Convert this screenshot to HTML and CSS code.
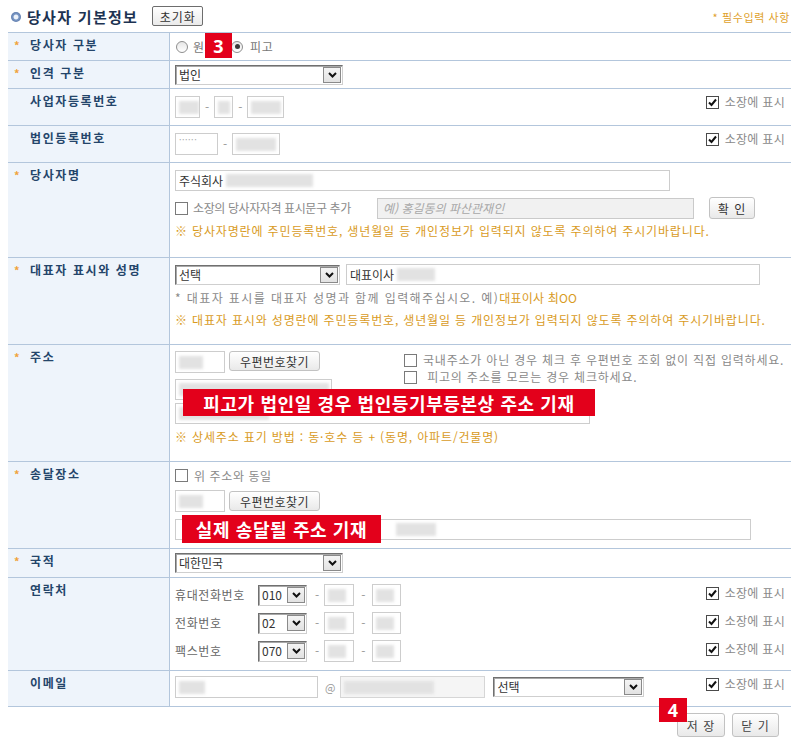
FILE: index.html
```html
<!DOCTYPE html>
<html lang="ko">
<head>
<meta charset="utf-8">
<title>당사자 기본정보</title>
<link rel="stylesheet" href="styles.css">
</head>
<body>
<div class="page">
  <div class="head">
    <div class="title">
      <span class="bullet"></span>
      <h2>당사자 기본정보</h2>
      <button class="btn-reset">초기화</button>
    </div>
    <div class="req">* 필수입력 사항</div>
  </div>

  <div class="form">
    <!-- 당사자 구분 -->
    <div class="row r1">
      <div class="lbl"><span class="star">*</span>당사자 구분</div>
      <div class="val center">
        <span class="radio r-first"></span><span class="opt">원고</span>
        <span class="radio on r-second"></span><span class="opt opt2">피고</span>
        <span class="badge b3">3</span>
      </div>
    </div>

    <!-- 인격 구분 -->
    <div class="row r2">
      <div class="lbl"><span class="star">*</span>인격 구분</div>
      <div class="val center">
        <div class="sel w168"><span class="sel-txt">법인</span><span class="sel-btn"><svg width="9" height="6" viewBox="0 0 9 6"><polyline points="1,1 4.5,4.5 8,1" fill="none" stroke="#111" stroke-width="2"/></svg></span></div>
      </div>
    </div>

    <!-- 사업자등록번호 -->
    <div class="row r3">
      <div class="lbl"><span class="nostar"></span>사업자등록번호</div>
      <div class="val split">
        <div class="line">
          <span class="inp biz1"><span class="blur bw20"></span></span>
          <span class="dash">-</span>
          <span class="inp biz2"><span class="blur bw12"></span></span>
          <span class="dash">-</span>
          <span class="inp biz3"><span class="blur bw30"></span></span>
        </div>
        <label class="show"><span class="cb on"><svg width="11" height="11" viewBox="0 0 11 11"><polyline points="2,5.5 4.5,8 9,2.5" fill="none" stroke="#111" stroke-width="2"/></svg></span><span>소장에 표시</span></label>
      </div>
    </div>

    <!-- 법인등록번호 -->
    <div class="row r4">
      <div class="lbl"><span class="nostar"></span>법인등록번호</div>
      <div class="val split">
        <div class="line">
          <span class="inp corp1"><span class="dots">· · · · · ·</span></span>
          <span class="dash">-</span>
          <span class="inp corp2"><span class="blur bw40"></span></span>
        </div>
        <label class="show"><span class="cb on"><svg width="11" height="11" viewBox="0 0 11 11"><polyline points="2,5.5 4.5,8 9,2.5" fill="none" stroke="#111" stroke-width="2"/></svg></span><span>소장에 표시</span></label>
      </div>
    </div>

    <!-- 당사자명 -->
    <div class="row r5">
      <div class="lbl"><span class="star">*</span>당사자명</div>
      <div class="val">
        <span class="inp name">주식회사<span class="blur bw87 ml3"></span></span>
        <div class="line l-qual">
          <span class="cb"></span>
          <span class="qual-txt">소장의 당사자자격 표시문구 추가</span>
          <span class="inp qual"><em>예) 홍길동의 파산관재인</em></span>
          <button class="btn ok">확 인</button>
        </div>
        <p class="warn w-name">※ 당사자명란에 주민등록번호, 생년월일 등 개인정보가 입력되지 않도록 주의하여 주시기바랍니다.</p>
      </div>
    </div>

    <!-- 대표자 -->
    <div class="row r6">
      <div class="lbl"><span class="star">*</span>대표자 표시와 성명</div>
      <div class="val">
        <div class="line">
          <div class="sel w165"><span class="sel-txt">선택</span><span class="sel-btn"><svg width="9" height="6" viewBox="0 0 9 6"><polyline points="1,1 4.5,4.5 8,1" fill="none" stroke="#111" stroke-width="2"/></svg></span></div>
          <span class="inp rep">대표이사<span class="blur bw38 ml3"></span></span>
        </div>
        <p class="note">* 대표자 표시를 대표자 성명과 함께 입력해주십시오. 예)<span class="orange">대표이사 최OO</span></p>
        <p class="warn w-rep">※ 대표자 표시와 성명란에 주민등록번호, 생년월일 등 개인정보가 입력되지 않도록 주의하여 주시기바랍니다.</p>
      </div>
    </div>

    <!-- 주소 -->
    <div class="row r7">
      <div class="lbl"><span class="star">*</span>주소</div>
      <div class="val">
        <div class="line l-zip">
          <span class="inp zip"><span class="blur bw24"></span></span>
          <button class="btn post">우편번호찾기</button>
          <div class="addr-opts">
            <label class="opt-line"><span class="cb"></span><span>국내주소가 아닌 경우 체크 후 우편번호 조회 없이 직접 입력하세요.</span></label>
            <label class="opt-line o2"><span class="cb"></span><span>&nbsp;피고의 주소를 모르는 경우 체크하세요.</span></label>
          </div>
        </div>
        <span class="inp addr1"><span class="blur bw150"></span></span>
        <span class="inp addr2"><span class="blur bw90"></span></span>
        <p class="warn w-addr">※ 상세주소 표기 방법 : 동·호수 등 + (동명, 아파트/건물명)</p>
        <div class="callout c1">피고가 법인일 경우 법인등기부등본상 주소 기재</div>
      </div>
    </div>

    <!-- 송달장소 -->
    <div class="row r8">
      <div class="lbl"><span class="star">*</span>송달장소</div>
      <div class="val">
        <label class="line l-same"><span class="cb"></span><span class="same-txt">위 주소와 동일</span></label>
        <div class="line l-zip2">
          <span class="inp zip"><span class="blur bw24"></span></span>
          <button class="btn post">우편번호찾기</button>
        </div>
        <span class="inp addr3"><span class="blur bw40 ml-far"></span></span>
        <div class="callout c2">실제 송달될 주소 기재</div>
      </div>
    </div>

    <!-- 국적 -->
    <div class="row r9">
      <div class="lbl"><span class="star">*</span>국적</div>
      <div class="val center">
        <div class="sel w168"><span class="sel-txt">대한민국</span><span class="sel-btn"><svg width="9" height="6" viewBox="0 0 9 6"><polyline points="1,1 4.5,4.5 8,1" fill="none" stroke="#111" stroke-width="2"/></svg></span></div>
      </div>
    </div>

    <!-- 연락처 -->
    <div class="row r10">
      <div class="lbl"><span class="nostar"></span>연락처</div>
      <div class="val">
        <div class="phone">
          <div class="line">
            <span class="sub">휴대전화번호</span>
            <div class="sel w49 h21"><span class="sel-txt">010</span><span class="sel-btn"><svg width="9" height="6" viewBox="0 0 9 6"><polyline points="1,1 4.5,4.5 8,1" fill="none" stroke="#111" stroke-width="2"/></svg></span></div>
            <span class="dash d2">-</span>
            <span class="inp tel1"><span class="blur bw18"></span></span>
            <span class="dash d3">-</span>
            <span class="inp tel2"><span class="blur bw18"></span></span>
          </div>
          <label class="show"><span class="cb on"><svg width="11" height="11" viewBox="0 0 11 11"><polyline points="2,5.5 4.5,8 9,2.5" fill="none" stroke="#111" stroke-width="2"/></svg></span><span>소장에 표시</span></label>
        </div>
        <div class="phone">
          <div class="line">
            <span class="sub">전화번호</span>
            <div class="sel w49 h21"><span class="sel-txt">02</span><span class="sel-btn"><svg width="9" height="6" viewBox="0 0 9 6"><polyline points="1,1 4.5,4.5 8,1" fill="none" stroke="#111" stroke-width="2"/></svg></span></div>
            <span class="dash d2">-</span>
            <span class="inp tel1"><span class="blur bw18"></span></span>
            <span class="dash d3">-</span>
            <span class="inp tel2"><span class="blur bw18"></span></span>
          </div>
          <label class="show"><span class="cb on"><svg width="11" height="11" viewBox="0 0 11 11"><polyline points="2,5.5 4.5,8 9,2.5" fill="none" stroke="#111" stroke-width="2"/></svg></span><span>소장에 표시</span></label>
        </div>
        <div class="phone">
          <div class="line">
            <span class="sub">팩스번호</span>
            <div class="sel w49 h21"><span class="sel-txt">070</span><span class="sel-btn"><svg width="9" height="6" viewBox="0 0 9 6"><polyline points="1,1 4.5,4.5 8,1" fill="none" stroke="#111" stroke-width="2"/></svg></span></div>
            <span class="dash d2">-</span>
            <span class="inp tel1"><span class="blur bw18"></span></span>
            <span class="dash d3">-</span>
            <span class="inp tel2"><span class="blur bw18"></span></span>
          </div>
          <label class="show"><span class="cb on"><svg width="11" height="11" viewBox="0 0 11 11"><polyline points="2,5.5 4.5,8 9,2.5" fill="none" stroke="#111" stroke-width="2"/></svg></span><span>소장에 표시</span></label>
        </div>
      </div>
    </div>

    <!-- 이메일 -->
    <div class="row r11">
      <div class="lbl"><span class="nostar"></span>이메일</div>
      <div class="val split">
        <div class="line">
          <span class="inp mail1"><span class="blur bw26"></span></span>
          <span class="at">@</span>
          <span class="inp mail2"><span class="blur bw90"></span></span>
          <div class="sel w151"><span class="sel-txt">선택</span><span class="sel-btn"><svg width="9" height="6" viewBox="0 0 9 6"><polyline points="1,1 4.5,4.5 8,1" fill="none" stroke="#111" stroke-width="2"/></svg></span></div>
        </div>
        <label class="show s-mail"><span class="cb on"><svg width="11" height="11" viewBox="0 0 11 11"><polyline points="2,5.5 4.5,8 9,2.5" fill="none" stroke="#111" stroke-width="2"/></svg></span><span>소장에 표시</span></label>
      </div>
    </div>
  </div>

  <div class="actions">
    <button class="btn act save">저 장</button>
    <button class="btn act close">닫 기</button>
    <span class="badge b4">4</span>
  </div>
</div>
</body>
</html>
```

FILE: styles.css
```css
* { box-sizing: border-box; }
body {
  margin: 0;
  font-family: "Noto Sans CJK KR", "Noto Sans", sans-serif;
  font-size: 12px;
  color: #555;
  background: #fff;
}
p { margin: 0; }
button { font-family: inherit; }

.page { width: 783px; margin-left: 8px; }

/* header */
.head {
  height: 32px;
  display: flex;
  align-items: center;
  justify-content: space-between;
}
.title { display: flex; align-items: center; }
.bullet {
  width: 10px; height: 10px; border-radius: 50%;
  margin: 1px 6px 0 3px;
  background: radial-gradient(circle, #eef3fa 0 28%, #7f9cc8 40%, #3e5d93 100%);
}
.title h2 {
  margin: 0;
  font-size: 15px;
  font-weight: bold;
  color: #1d3352;
  letter-spacing: 1.3px;
}
.btn-reset {
  margin-left: 14px;
  width: 51px; height: 20px;
  padding: 0;
  font-size: 12px;
  color: #333;
  background: linear-gradient(#ffffff, #eaeaea);
  border: 1px solid #6d6d6d;
  border-radius: 2px;
  letter-spacing: 1px;
}
.req {
  color: #e0a12b;
  font-size: 11px;
  letter-spacing: 0.6px;
  margin-right: 1px;
  margin-top: 2px;
}

/* form grid */
.form { border-top: 1px solid #b3c6dc; }
.row {
  display: grid;
  grid-template-columns: 162px 1fr;
  border-bottom: 1px solid #b3c6dc;
}
.r1 { height: 28px; }
.r2 { height: 28px; }
.r3 { height: 37px; }
.r4 { height: 37px; }
.r5 { height: 95px; }
.r6 { height: 87px; }
.r7 { height: 117px; }
.r8 { height: 87px; }
.r9 { height: 29px; }
.r10 { height: 93px; }
.r11 { height: 36px; }

.lbl {
  background: #eef4fb;
  border-right: 1px solid #b3c6dc;
  padding: 5px 0 0 6px;
  font-weight: bold;
  color: #24456a;
  line-height: 14px;
  letter-spacing: 1.6px;
  display: flex;
  align-items: flex-start;
}
.star, .nostar {
  display: inline-block;
  width: 16px;
  flex: none;
}
.star { color: #f0a33a; font-weight: bold; font-size: 11px; }

.val {
  position: relative;
  padding: 6px 6px 0 5px;
  line-height: 14px;
}
.val.center { display: flex; align-items: center; padding-top: 0; }
.val.split { display: flex; justify-content: space-between; align-items: flex-start; }
.r3 .val, .r4 .val, .r5 .val { padding-top: 7px; }
.r11 .val { padding-top: 5px; }

.line { display: flex; align-items: center; }

/* radios */
.radio {
  width: 12px; height: 12px; border-radius: 50%;
  border: 1px solid #8e8e8e;
  background: linear-gradient(#e6e6e6, #ffffff);
  display: inline-flex; align-items: center; justify-content: center;
  flex: none;
}
.radio.on::after {
  content: "";
  width: 5px; height: 5px; border-radius: 50%;
  background: #3a3a3a;
}
.r-first { margin-left: 1px; }
.r-second { margin-left: 15px; }
.opt { margin-left: 5px; color: #777; letter-spacing: 0.5px; }
.opt2 { margin-left: 7px; }

/* badges */
.badge {
  position: absolute;
  background: #e3001b;
  color: #fff;
  font-weight: bold;
  font-size: 18px;
  font-family: "Noto Sans", "Liberation Sans", sans-serif;
  display: flex; align-items: center; justify-content: center;
}
.b3 { left: 35px; top: 0; width: 27px; height: 25px; }
.b4 { left: 651px; top: -9px; width: 28px; height: 24px; }

/* select */
.sel {
  display: flex;
  align-items: center;
  justify-content: space-between;
  height: 20px;
  border: 1px solid;
  border-color: #707070 #cfcfcf #cfcfcf #707070;
  box-shadow: inset 1px 1px 0 #a9a9a9;
  background: #fff;
  padding-left: 3px;
  color: #333;
  flex: none;
}
.sel-txt { line-height: 14px; }
.sel-btn {
  width: 18px; height: 16px;
  margin-right: 1px;
  background: linear-gradient(#f4f4f4, #e2e2e2);
  border: 1px solid #8a8a8a;
  display: flex; align-items: center; justify-content: center;
}
.w168 { width: 168px; }
.w165 { width: 165px; }
.w151 { width: 151px; margin-left: 8px; }
.w49 { width: 49px; }
.h21 { height: 21px; }

/* inputs */
.inp {
  display: flex;
  align-items: center;
  height: 22px;
  border: 1px solid #cdcdcd;
  background: #fff;
  padding-left: 3px;
  color: #333;
  overflow: hidden;
  flex: none;
}
.blur {
  display: inline-block;
  height: 13px;
  background: #e2e2e2;
  filter: blur(1.5px);
  flex: none;
}
.ml3 { margin-left: 3px; }
.bw12 { width: 12px; }
.bw18 { width: 18px; }
.bw20 { width: 20px; }
.bw24 { width: 24px; }
.bw26 { width: 26px; }
.bw30 { width: 30px; }
.bw38 { width: 38px; }
.bw40 { width: 40px; }
.bw87 { width: 87px; }
.bw90 { width: 90px; }
.bw150 { width: 150px; }
.dots { color: #aaa; font-size: 9px; letter-spacing: -1px; margin-top: -8px; }

.dash { color: #999; margin: 0 5px; }
.biz1 { width: 25px; }
.biz2 { width: 19px; }
.biz3 { width: 37px; }
.corp1 { width: 43px; }
.corp2 { width: 48px; }

/* checkbox */
.cb {
  width: 13px; height: 13px;
  border: 1px solid #7a7a7a;
  background: #fff;
  display: inline-flex; align-items: center; justify-content: center;
  flex: none;
}
.cb.on { border-color: #4a4a4a; }
.show {
  display: flex;
  align-items: center;
  color: #8a8a8a;
  margin-top: -1px;
  letter-spacing: 0.3px;
}
.show .cb { margin-right: 6px; }

/* 당사자명 */
.name { width: 495px; height: 21px; }
.l-qual { margin-top: 6px; height: 22px; }
.qual-txt { margin-left: 5px; width: 184px; color: #8a8a8a; letter-spacing: -0.4px; white-space: nowrap; }
.qual { width: 317px; height: 21px; background: #f1f1f1; border-color: #cacaca; padding-left: 5px; }
.qual em { color: #a8a8a8; font-style: italic; }

.btn {
  height: 20px;
  padding: 0;
  font-size: 12px;
  color: #333;
  background: linear-gradient(#ffffff, #e9e9e9);
  border: 1px solid #c2c2c2;
  border-radius: 3px;
  flex: none;
}
.ok { width: 46px; height: 22px; margin-left: 15px; letter-spacing: 1px; }

.warn { color: #d99b1e; white-space: nowrap; letter-spacing: 0.85px; }
.w-name { margin-top: 5px; }

/* 대표자 */
.r6 .line { height: 21px; }
.rep { width: 414px; height: 21px; margin-left: 6px; }
.note { margin-top: 6px; color: #8a8a8a; white-space: nowrap; letter-spacing: 1.4px; }
.orange { color: #d99b1e; letter-spacing: 0.2px; }
.w-rep { margin-top: 8px; }

/* 주소 */
.l-zip { height: 22px; align-items: flex-start; }
.zip { width: 50px; }
.post { width: 91px; margin-left: 4px; letter-spacing: 0.5px; }
.addr-opts { margin-left: 84px; margin-top: 0; }
.opt-line { display: flex; align-items: center; height: 17px; color: #8a8a8a; white-space: nowrap; letter-spacing: 0.8px; }
.opt-line .cb { margin-right: 6px; margin-top: 1px; }
.addr1 { width: 157px; height: 21px; margin-top: 6px; }
.addr2 { width: 415px; height: 21px; margin-top: 3px; }
.w-addr { margin-top: 6px; }

.callout {
  position: absolute;
  background: #e3001b;
  color: #fff;
  font-weight: bold;
  font-size: 18px;
  letter-spacing: 0.6px;
  display: flex; align-items: center; justify-content: center;
  white-space: nowrap;
}
.c1 { left: 13px; top: 44px; width: 412px; height: 27px; }
.c2 { left: 12px; top: 53px; width: 199px; height: 28px; }

/* 송달장소 */
.r8 .val { padding-top: 6px; }
.l-same { height: 15px; }
.same-txt { margin-left: 6px; color: #8a8a8a; letter-spacing: 0.6px; }
.l-zip2 { margin-top: 7px; height: 22px; }
.addr3 { width: 576px; height: 21px; margin-top: 7px; }
.ml-far { margin-left: 217px; }

/* 연락처 */
.phone { display: flex; justify-content: space-between; align-items: flex-start; height: 22px; }
.phone + .phone { margin-top: 6px; }
.phone .show { margin-top: 2px; }
.sub { width: 83px; color: #666; letter-spacing: 0.6px; }
.d2 { margin: 0 5px 0 8px; }
.d3 { margin: 0 7px 0 7px; }
.tel1 { width: 30px; }
.tel2 { width: 29px; }

/* 이메일 */
.mail1 { width: 143px; }
.at { color: #999; margin: 0 5px 0 7px; font-size: 11px; }
.mail2 { width: 145px; background: #f5f5f5; border-color: #d6d6d6; }
.s-mail { margin-top: 1px; }

/* actions */
.actions {
  position: relative;
  display: flex;
  justify-content: flex-end;
  padding: 6px 12px 0 0;
}
.act { width: 48px; height: 24px; letter-spacing: 1px; color: #444; }
.close { width: 47px; margin-left: 7px; }
```
